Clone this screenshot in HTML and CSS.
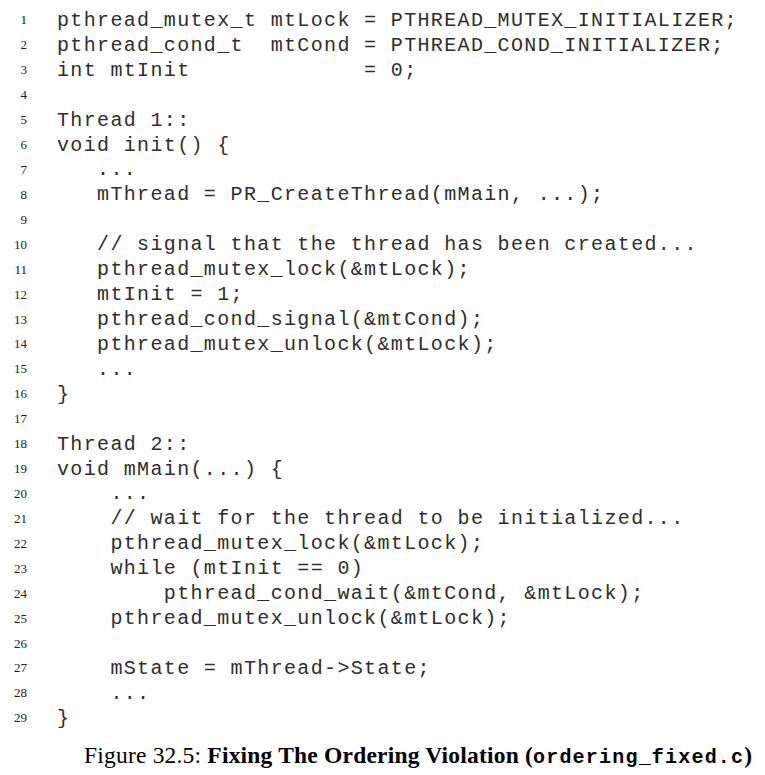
FILE: index.html
```html
<!DOCTYPE html>
<html>
<head>
<meta charset="utf-8">
<link rel="stylesheet" href="styles.css">
</head>
<body>
<div class="figure">
  <div class="listing">
    <div class="ln">1</div><div class="code">pthread_mutex_t mtLock = PTHREAD_MUTEX_INITIALIZER;</div>
    <div class="ln">2</div><div class="code">pthread_cond_t  mtCond = PTHREAD_COND_INITIALIZER;</div>
    <div class="ln">3</div><div class="code">int mtInit             = 0;</div>
    <div class="ln">4</div><div class="code"></div>
    <div class="ln">5</div><div class="code">Thread 1::</div>
    <div class="ln">6</div><div class="code">void init() {</div>
    <div class="ln">7</div><div class="code">   ...</div>
    <div class="ln">8</div><div class="code">   mThread = PR_CreateThread(mMain, ...);</div>
    <div class="ln">9</div><div class="code"></div>
    <div class="ln">10</div><div class="code">   // signal that the thread has been created...</div>
    <div class="ln">11</div><div class="code">   pthread_mutex_lock(&amp;mtLock);</div>
    <div class="ln">12</div><div class="code">   mtInit = 1;</div>
    <div class="ln">13</div><div class="code">   pthread_cond_signal(&amp;mtCond);</div>
    <div class="ln">14</div><div class="code">   pthread_mutex_unlock(&amp;mtLock);</div>
    <div class="ln">15</div><div class="code">   ...</div>
    <div class="ln">16</div><div class="code">}</div>
    <div class="ln">17</div><div class="code"></div>
    <div class="ln">18</div><div class="code">Thread 2::</div>
    <div class="ln">19</div><div class="code">void mMain(...) {</div>
    <div class="ln">20</div><div class="code">    ...</div>
    <div class="ln">21</div><div class="code">    // wait for the thread to be initialized...</div>
    <div class="ln">22</div><div class="code">    pthread_mutex_lock(&amp;mtLock);</div>
    <div class="ln">23</div><div class="code">    while (mtInit == 0)</div>
    <div class="ln">24</div><div class="code">        pthread_cond_wait(&amp;mtCond, &amp;mtLock);</div>
    <div class="ln">25</div><div class="code">    pthread_mutex_unlock(&amp;mtLock);</div>
    <div class="ln">26</div><div class="code"></div>
    <div class="ln">27</div><div class="code">    mState = mThread-&gt;State;</div>
    <div class="ln">28</div><div class="code">    ...</div>
    <div class="ln">29</div><div class="code">}</div>
  </div>
  <div class="caption">Figure 32.5: <b>Fixing The Ordering Violation (<span class="tt">ordering_fixed.c</span>)</b></div>
</div>
</body>
</html>
```
FILE: styles.css
```css
html, body {
  margin: 0;
  padding: 0;
  background: #ffffff;
}
body {
  width: 765px;
  height: 775px;
  overflow: hidden;
  color: #1a1a1a;
}
.figure {
  padding-top: 8px;
}
.listing {
  display: grid;
  grid-template-columns: 27px 1fr;
  column-gap: 30px;
  grid-auto-rows: 24.93px;
  align-items: center;
}
.ln {
  font-family: "Liberation Serif", serif;
  font-size: 13px;
  text-align: right;
  color: #222;
}
.code {
  font-family: "Liberation Mono", monospace;
  font-size: 20px;
  letter-spacing: 1.35px;
  white-space: pre;
  color: #2e2e2e;
}
.caption {
  padding-left: 84px;
  margin-top: 11px;
  font-family: "Liberation Serif", serif;
  font-size: 23.5px;
  letter-spacing: 0.2px;
  color: #000;
  white-space: nowrap;
}
.caption b {
  font-weight: bold;
}
.tt {
  font-family: "Liberation Mono", monospace;
  font-size: 20px;
  letter-spacing: 1.2px;
}
```
